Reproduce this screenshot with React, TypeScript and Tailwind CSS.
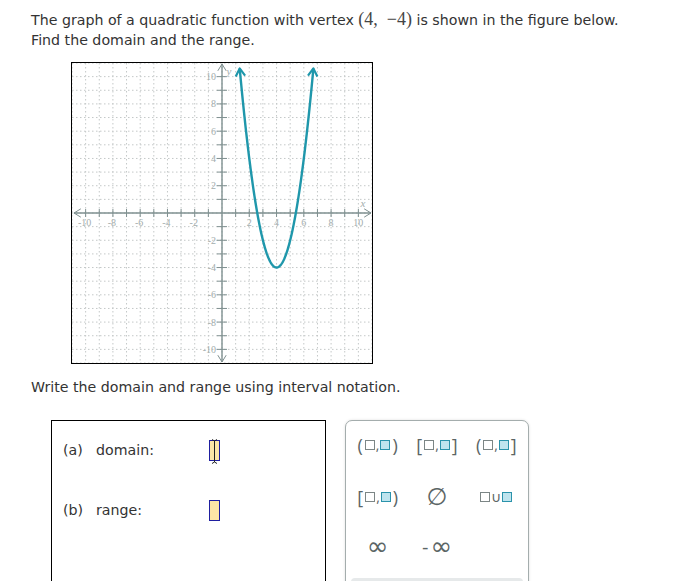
import React from 'react';

const U = 300 / 22;
const sx = (x: number) => 150 + x * U;
const sy = (y: number) => 150 - y * U;
const f = (x: number) => 2 * (x - 4) ** 2 - 4;

const GRID = Array.from({ length: 23 }, (_, i) => i - 11);
const LABELS = [-10, -8, -6, -4, -2, 2, 4, 6, 8, 10];

function chevron(tx: number, ty: number, dx: number, dy: number, len = 8, spread = 0.5) {
  const m = Math.hypot(dx, dy);
  const ux = dx / m;
  const uy = dy / m;
  const a = (s: number) => {
    const c = Math.cos(s);
    const sn = Math.sin(s);
    const rx = -ux * c + uy * sn;
    const ry = -uy * c - ux * sn;
    return `${tx + rx * len},${ty + ry * len}`;
  };
  return `M${a(spread)} L${tx},${ty} L${a(-spread)}`;
}

function Graph() {
  const x0 = 4 - Math.sqrt(7.3);
  const x1 = 4 + Math.sqrt(7.3);
  const pts: string[] = [];
  for (let x = x0; x <= x1 + 1e-6; x += 0.04) pts.push(`${sx(x).toFixed(2)},${sy(f(x)).toFixed(2)}`);
  pts.push(`${sx(x1).toFixed(2)},${sy(f(x1)).toFixed(2)}`);
  const dl = { x: -1, y: -4 * (x0 - 4) };
  const dr = { x: 1, y: 4 * (x1 - 4) };
  const axis = '#7f9090';
  const label = '#a3adad';
  return (
    <div className="ml-[40px] mt-[12px] h-[302px] w-[302px] border border-black bg-white">
      <svg width={300} height={300} viewBox="0 0 300 300" className="block">
        {GRID.map((g) => (
          <g key={g}>
            <line x1={sx(g)} y1={0} x2={sx(g)} y2={300} stroke="#c4c8c8" strokeWidth={1} strokeDasharray="1.5 2.5" />
            <line x1={0} y1={sy(g)} x2={300} y2={sy(g)} stroke="#c4c8c8" strokeWidth={1} strokeDasharray="1.5 2.5" />
          </g>
        ))}
        <line x1={2} y1={150} x2={299} y2={150} stroke={axis} strokeWidth={1.4} />
        <line x1={150} y1={1} x2={150} y2={299} stroke={axis} strokeWidth={1.4} />
        <path d={chevron(2, 150, -1, 0, 8, 0.55)} fill="none" stroke={axis} strokeWidth={1} />
        <path d={chevron(299, 150, 1, 0, 8, 0.55)} fill="none" stroke={axis} strokeWidth={1} />
        <path d={chevron(150, 1, 0, -1, 8, 0.55)} fill="none" stroke={axis} strokeWidth={1} />
        <path d={chevron(150, 299, 0, 1, 8, 0.55)} fill="none" stroke={axis} strokeWidth={1} />
        {GRID.filter((g) => g !== 0 && Math.abs(g) <= 10).map((g) => (
          <g key={`t${g}`}>
            <line x1={sx(g)} y1={146} x2={sx(g)} y2={154} stroke={axis} strokeWidth={1} />
            <line x1={145} y1={sy(g)} x2={155} y2={sy(g)} stroke={axis} strokeWidth={1} />
          </g>
        ))}
        <g fontFamily='"Liberation Serif", serif' fontSize={10} fill={label}>
          {LABELS.map((v) => (
            <text key={`x${v}`} x={sx(v) + (v < 0 ? -1 : 0)} y={163} textAnchor="middle">
              {v}
            </text>
          ))}
          {LABELS.map((v) => (
            <text key={`y${v}`} x={144} y={sy(v) + 3.5} textAnchor="end">
              {v}
            </text>
          ))}
          <text x={291} y={144} fontStyle="italic" fontSize={11} textAnchor="middle">
            x
          </text>
          <text x={157} y={12} fontStyle="italic" fontSize={11} textAnchor="middle">
            y
          </text>
        </g>
        <polyline points={pts.join(' ')} fill="none" stroke="#1f97ab" strokeWidth={2.4} strokeLinejoin="round" />
        <path
          d={chevron(sx(x0), sy(f(x0)), dl.x * U, -dl.y * U, 9, 0.55)}
          fill="none"
          stroke="#1f97ab"
          strokeWidth={2.2}
          strokeLinejoin="round"
        />
        <path
          d={chevron(sx(x1), sy(f(x1)), dr.x * U, -dr.y * U, 9, 0.55)}
          fill="none"
          stroke="#1f97ab"
          strokeWidth={2.2}
          strokeLinejoin="round"
        />
      </svg>
    </div>
  );
}

function Sq({ filled }: { filled?: boolean }) {
  return (
    <span
      className={`inline-block h-[10px] w-[10px] border ${
        filled ? 'border-[#2b93ab] bg-[#bfe4ee]' : 'border-[#7c8686] bg-white'
      }`}
    />
  );
}

function Interval({ open, close }: { open: string; close: string }) {
  return (
    <span className="flex items-center text-[18px] leading-none text-[#5b6565]">
      <span>{open}</span>
      <span className="mx-[2px] flex items-end gap-[1px]">
        <Sq />
        <span className="text-[14px] leading-[10px]">,</span>
        <Sq filled />
      </span>
      <span>{close}</span>
    </span>
  );
}

function AnswerInput({ cursor }: { cursor?: boolean }) {
  return (
    <span className="relative inline-block h-[21px] w-[11px] border border-[#1f1fa0] bg-[#fde6a6]">
      {cursor && (
        <svg className="absolute left-[-1px] top-[-3px]" width={11} height={27} viewBox="0 0 11 27">
          <path d="M3 1.5 L5.5 3 L8 1.5 M5.5 3 L5.5 24 M3 25.5 L5.5 24 L8 25.5" fill="none" stroke="#222" strokeWidth={1} />
        </svg>
      )}
    </span>
  );
}

export default function App() {
  return (
    <div className="min-h-[581px] w-[677px] overflow-hidden bg-white pt-[9px] text-[#333] [font-family:'DejaVu_Sans',Verdana,sans-serif]">
      <div className="pl-[31px] text-[14.2px] leading-[20px]">
        <p>
          The graph of a quadratic function with vertex{' '}
          <span className="text-[18px] text-[#444] [font-family:'Liberation_Serif',serif]">(4,&nbsp;&nbsp;−4)</span> is
          shown in the figure below.
        </p>
        <p>Find the domain and the range.</p>
        <Graph />
        <p className="mt-[13px]">Write the domain and range using interval notation.</p>
      </div>

      <div className="mt-[23px] flex items-start pl-[51px]">
        <div className="h-[200px] w-[275px] border border-black px-[11px] pt-[19px] text-[14.2px]">
          <div className="flex h-[21px] items-center">
            <span className="w-[33px]">(a)</span>
            <span className="w-[113px]">domain:</span>
            <AnswerInput cursor />
          </div>
          <div className="mt-[39px] flex h-[21px] items-center">
            <span className="w-[33px]">(b)</span>
            <span className="w-[113px]">range:</span>
            <AnswerInput />
          </div>
        </div>

        <div className="ml-[19px] flex h-[200px] w-[184px] flex-col rounded-[7px] border border-[#a4adad] bg-white shadow-[0_0_3px_rgba(0,0,0,0.12)] [font-family:'Open_Sans',sans-serif]">
          <div className="grid grid-cols-3 px-[2px] pt-[12px]">
            <div className="flex h-[24px] items-center justify-center">
              <Interval open="(" close=")" />
            </div>
            <div className="flex h-[24px] items-center justify-center">
              <Interval open="[" close="]" />
            </div>
            <div className="flex h-[24px] items-center justify-center">
              <Interval open="(" close="]" />
            </div>
            <div className="mt-[28px] flex h-[24px] items-center justify-center">
              <Interval open="[" close=")" />
            </div>
            <div className="mt-[28px] flex h-[24px] items-center justify-center text-[24px] text-[#5b6565] [font-family:'DejaVu_Sans',sans-serif]">
              ∅
            </div>
            <div className="mt-[28px] flex h-[24px] items-center justify-center gap-[1px] text-[14px] text-[#5b6565]">
              <Sq />
              <span className="leading-none">∪</span>
              <Sq filled />
            </div>
            <div className="mt-[25px] flex h-[24px] items-center justify-center text-[26px] text-[#5b6565] [font-family:'DejaVu_Sans',sans-serif]">
              ∞
            </div>
            <div className="mt-[25px] flex h-[24px] items-center justify-center text-[26px] text-[#5b6565] [font-family:'DejaVu_Sans',sans-serif]">
              <span className="mr-[2px] text-[18px]">-</span>∞
            </div>
          </div>
          <div className="mx-[5px] mt-[20px] h-[20px] rounded-t-[4px] bg-[#e6e9ea]" />
        </div>
      </div>
    </div>
  );
}
